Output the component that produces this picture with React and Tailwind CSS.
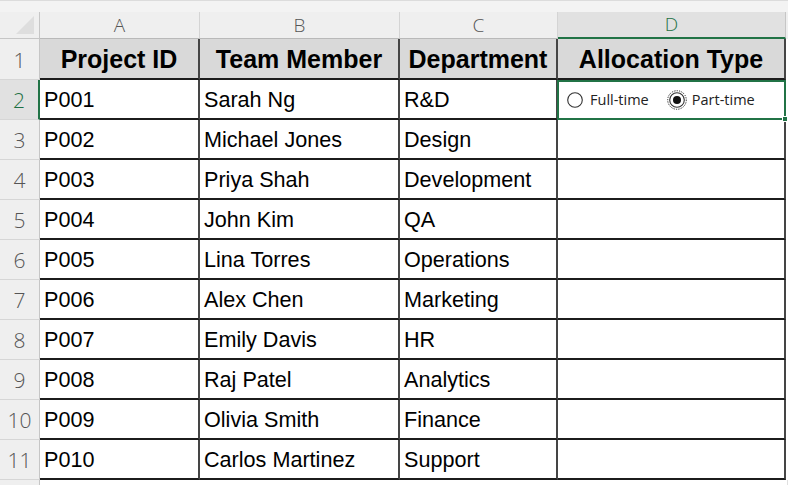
import React from "react";

// Sheet data
const rows = [
  ["P001", "Sarah Ng", "R&D"],
  ["P002", "Michael Jones", "Design"],
  ["P003", "Priya Shah", "Development"],
  ["P004", "John Kim", "QA"],
  ["P005", "Lina Torres", "Operations"],
  ["P006", "Alex Chen", "Marketing"],
  ["P007", "Emily Davis", "HR"],
  ["P008", "Raj Patel", "Analytics"],
  ["P009", "Olivia Smith", "Finance"],
  ["P010", "Carlos Martinez", "Support"],
];

const cols = ["A", "B", "C", "D"];
const headers = ["Project ID", "Team Member", "Department", "Allocation Type"];

const Radio = ({ checked }) => (
  <svg width="20" height="20" viewBox="0 0 20 20" className="shrink-0">
    {checked && (
      <circle cx="10" cy="10" r="9.3" fill="none" stroke="#222" strokeWidth="1" strokeDasharray="1.2 1.2" />
    )}
    <circle cx="10" cy="10" r="7.3" fill="#fff" stroke="#333" strokeWidth="1.1" />
    {checked && <circle cx="10" cy="10" r="4" fill="#111" />}
  </svg>
);

const RowHead = ({ n, active }) => (
  <div
    className={
      "flex items-end justify-center pb-[3px] border-b border-[#d6d6d6] text-[21px] font-light " +
      (active ? "bg-[#e1e1e1] text-[#1e7145] border-r-2 border-r-[#217346]" : "bg-[#efefef] text-[#555] border-r border-r-[#c6c6c6]")
    }
    style={{ fontFamily: '"Open Sans", sans-serif' }}
  >
    {n}
  </div>
);

const Cell = ({ children, className = "" }) => (
  <div
    className={
      "flex items-center pl-[4px] pt-[3px] border-b-2 border-b-[#1c1c1c] border-r-2 border-r-[#454545] text-[21.6px] text-black whitespace-nowrap overflow-hidden " +
      className
    }
  >
    {children}
  </div>
);

export default function App() {
  return (
    <div
      className="w-[788px] h-[485px] bg-white overflow-hidden"
      style={{ fontFamily: '"Liberation Sans", Arial, sans-serif' }}
    >
      {/* top strip */}
      <div className="h-[12px] bg-[#f3f3f3] border-t border-[#dcdcdc]" />
      <div className="grid grid-cols-[40px_160px_200px_158px_228px_2px] grid-rows-[27px_41px_repeat(10,40px)_6px]">
        {/* column headers */}
        <div className="relative bg-[#efefef] border-r border-b border-[#c6c6c6]">
          <div className="absolute right-[5px] bottom-[4px] w-0 h-0 border-l-[18px] border-l-transparent border-b-[18px] border-b-[#dedede]" />
        </div>
        {cols.map((c) => (
          <div
            key={c}
            className={
              "flex items-center justify-center text-[19px] font-light " +
              (c === "D"
                ? "bg-[#e1e1e1] text-[#1e7145] border-b-2 border-b-[#217346] border-r border-r-[#c6c6c6]"
                : "bg-[#efefef] text-[#555] border-b border-b-[#b9b9b9] border-r border-r-[#d4d4d4]")
            }
            style={{ fontFamily: '"Open Sans", sans-serif' }}
          >
            {c}
          </div>
        ))}
        <div className="bg-[#efefef]" />

        {/* header row */}
        <RowHead n={1} />
        {headers.map((h, i) => (
          <Cell
            key={h}
            className={"justify-center !pl-0 bg-[#d9d9d9] font-bold text-[25px] " + (i === 3 ? "border-r-[#3a3a3a]" : "")}
          >
            {h}
          </Cell>
        ))}
        <div className="bg-white" />

        {/* data rows */}
        {rows.map((r, i) => (
          <React.Fragment key={r[0]}>
            <RowHead n={i + 2} active={i === 0} />
            <Cell>{r[0]}</Cell>
            <Cell>{r[1]}</Cell>
            <Cell>{r[2]}</Cell>
            {i === 0 ? (
              <div className="relative flex items-center gap-[5px] pl-[6px] border-2 border-[#217346] -ml-[1px] text-[14.5px] text-[#222]" style={{ fontFamily: '"Open Sans", sans-serif' }}>
                <Radio />
                <span className="mr-[13px]">Full-time</span>
                <Radio checked />
                <span>Part-time</span>
                <div className="absolute -right-[4px] -bottom-[4px] w-[6px] h-[6px] bg-[#217346] border border-white" />
              </div>
            ) : (
              <Cell />
            )}
            <div className="bg-white" />
          </React.Fragment>
        ))}

        {/* bottom strip */}
        <div className="bg-[#efefef] border-r border-[#c6c6c6]" />
        <div className="col-span-5 bg-white border-r border-[#e0e0e0]" />
      </div>
    </div>
  );
}
